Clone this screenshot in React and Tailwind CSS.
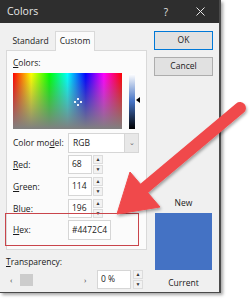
import React from "react";

const FONT = { fontFamily: '"Open Sans", "Noto Sans", Arial, sans-serif' };

function Spinner({ h = "h-[19px]" }) {
  return (
    <div className={`flex w-[10px] flex-col ${h} gap-[1px]`}>
      <div className="flex flex-1 items-center justify-center border border-[#dcdcdc] bg-[#f2f2f2] text-[5px] leading-none text-[#333]">
        ▲
      </div>
      <div className="flex flex-1 items-center justify-center border border-[#dcdcdc] bg-[#f2f2f2] text-[5px] leading-none text-[#333]">
        ▼
      </div>
    </div>
  );
}

function Label({ k, rest }) {
  return (
    <span className="w-[55px] shrink-0 text-[8.5px] leading-[10px] text-[#1a1a1a]">
      <span className="underline underline-offset-1">{k}</span>
      {rest}
    </span>
  );
}

function NumRow({ k, rest, value }) {
  return (
    <div className="flex h-[19px] items-center">
      <Label k={k} rest={rest} />
      <div className="flex h-[19px] w-[24px] items-center border border-[#d6d6d6] bg-white pl-[3px] text-[8.5px] text-[#1a1a1a]">
        {value}
      </div>
      <div className="ml-[1px]">
        <Spinner />
      </div>
    </div>
  );
}

function Arrow() {
  return (
    <svg
      className="pointer-events-none absolute left-0 top-0"
      width="251"
      height="300"
      viewBox="0 0 251 300"
    >
      <defs>
        <filter id="sh" x="-20%" y="-20%" width="140%" height="140%">
          <feDropShadow dx="1" dy="2" stdDeviation="1.6" floodColor="#000" floodOpacity="0.35" />
        </filter>
      </defs>
      <g filter="url(#sh)" fill="#f04a4c" stroke="#f04a4c">
        <line x1="141" y1="191" x2="240" y2="108" strokeWidth="12" strokeLinecap="round" />
        <polygon points="117,214 130,172 160,207" strokeWidth="1" strokeLinejoin="round" />
      </g>
    </svg>
  );
}

export default function App() {
  return (
    <div className="relative h-[300px] w-[251px] overflow-hidden bg-white" style={FONT}>
      {/* Dialog */}
      <div className="flex h-[293px] w-[221px] flex-col border-b border-r-2 border-[#4a4a4a] bg-[#f0f0f0] shadow-[2px_2px_3px_rgba(0,0,0,0.35)]">
        {/* Title bar */}
        <div className="flex h-[23px] shrink-0 items-center bg-[#2e2e2e] pl-[7px] text-[#e6e6e6]">
          <span className="text-[10.5px] leading-none">Colors</span>
          <span className="ml-auto text-[10px] leading-none">?</span>
          <svg className="ml-[28px] mr-[14px]" width="9" height="9" viewBox="0 0 9 9">
            <path d="M0.5 0.5L8.5 8.5M8.5 0.5L0.5 8.5" stroke="#e6e6e6" strokeWidth="1" />
          </svg>
        </div>

        {/* Body */}
        <div className="flex flex-1">
          {/* Left column */}
          <div className="ml-[6px] flex w-[141px] flex-col pt-[8px]">
            {/* Tabs */}
            <div className="flex h-[19px] items-stretch text-[8.5px] text-[#1a1a1a]">
              <div className="flex w-[49px] items-center justify-center pt-[2px]">Standard</div>
              <div className="relative z-10 -mb-px flex w-[40px] items-center justify-center border border-b-0 border-[#d9d9d9] bg-[#fbfbfb]">
                Custom
              </div>
            </div>

            {/* Panel */}
            <div className="relative flex h-[200px] flex-col border border-[#d9d9d9] bg-[#fbfbfb] pl-[6px] pt-[7px]">
              <span className="text-[8.5px] leading-[10px] text-[#1a1a1a]">
                <span className="underline underline-offset-1">C</span>olors:
              </span>

              <div className="mt-[5px] flex h-[56px]">
                <div className="relative h-[56px] w-[109px] bg-[linear-gradient(to_right,#ff0000,#ffff00,#00ff00,#00ffff,#0000ff,#ff00ff,#ff0000)]">
                  <div className="absolute inset-0 bg-[linear-gradient(to_bottom,rgba(128,128,128,0),#808080)]" />
                  {/* crosshair */}
                  <div className="absolute left-[64px] top-[25px] h-[2px] w-[2px] bg-white/90" />
                  <div className="absolute left-[64px] top-[31px] h-[2px] w-[2px] bg-white/90" />
                  <div className="absolute left-[61px] top-[28px] h-[2px] w-[2px] bg-white/90" />
                  <div className="absolute left-[67px] top-[28px] h-[2px] w-[2px] bg-white/90" />
                </div>
                <div className="ml-[7px] mt-[1px] h-[55px] w-[6px] bg-[linear-gradient(to_bottom,#ffffff,#4472c4_50%,#000000)]" />
                <div className="ml-[1px] mt-[24px] h-0 w-0 border-y-[3px] border-r-[4px] border-y-transparent border-r-black" />
              </div>

              {/* Color model */}
              <div className="mt-[4px] flex h-[20px] items-center">
                <Label k="" rest={<>Color mo<span className="underline underline-offset-1">d</span>el:</>} />
                <div className="flex h-[20px] w-[71px] border border-[#d6d6d6] bg-white">
                  <span className="flex flex-1 items-center pl-[4px] text-[8.5px] text-[#1a1a1a]">RGB</span>
                  <span className="flex w-[14px] items-center justify-center border-l border-[#d6d6d6] bg-[#e8e8e8] text-[7px] text-[#666]">
                    ⌄
                  </span>
                </div>
              </div>

              <div className="mt-[2px] flex flex-col gap-[3px]">
                <NumRow k="R" rest="ed:" value="68" />
                <NumRow k="G" rest="reen:" value="114" />
                <NumRow k="B" rest="lue:" value="196" />
              </div>

              {/* Hex */}
              <div className="mt-[2px] flex h-[20px] items-center">
                <Label k="H" rest="ex:" />
                <div className="flex h-[20px] w-[43px] items-center border border-[#d6d6d6] bg-white pl-[3px] text-[8.5px] text-[#1a1a1a]">
                  #4472C4
                </div>
              </div>

              {/* annotation box */}
              <div className="absolute left-[-2px] top-[162px] h-[33px] w-[134px] border-[1.5px] border-[#c9454b]" />
            </div>

            {/* Transparency */}
            <span className="mt-[7px] text-[8.5px] leading-[10px] text-[#1a1a1a]">
              <span className="underline underline-offset-1">T</span>ransparency:
            </span>
            <div className="mt-[3px] flex h-[19px] items-center">
              <span className="ml-[4px] w-[10px] text-[8px] text-[#444]">‹</span>
              <div className="h-[12px] w-[13px] bg-[#cccccc]" />
              <span className="ml-[51px] w-[10px] text-[8px] text-[#444]">›</span>
              <div className="ml-[3px] flex h-[19px] w-[34px] items-center border border-[#d6d6d6] bg-white pl-[3px] text-[8.5px] text-[#1a1a1a]">
                0 %
              </div>
              <div className="ml-[2px]">
                <Spinner />
              </div>
            </div>
          </div>

          {/* Right column */}
          <div className="ml-[7px] flex w-[59px] flex-col items-center pt-[8px] text-[8.5px] text-[#1a1a1a]">
            <div className="flex h-[19px] w-[59px] items-center justify-center border border-[#0078d7] bg-[#e1e1e1]">
              OK
            </div>
            <div className="mt-[7px] flex h-[19px] w-[59px] items-center justify-center border border-[#adadad] bg-[#e1e1e1]">
              Cancel
            </div>
            <span className="mt-[122px] leading-[10px]">New</span>
            <div className="mt-[5px] h-[57px] w-[57px] bg-[#4472c4]" />
            <span className="mt-[8px] leading-[10px]">Current</span>
          </div>
        </div>
      </div>

      <Arrow />
    </div>
  );
}
